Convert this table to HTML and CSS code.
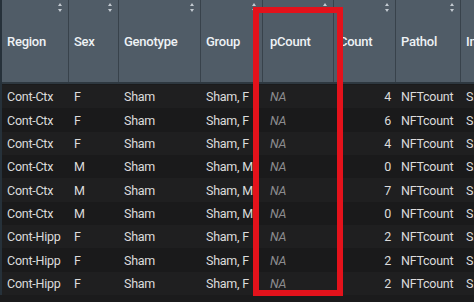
FILE: index.html
```html
<!DOCTYPE html>
<html>
<head>
<meta charset="utf-8">
<link rel="stylesheet" href="styles.css">
</head>
<body>
<div class="grid">
  <div class="row head">
    <div class="c c1"><span>Region</span><i class="sort"></i></div>
    <div class="c c2"><span>Sex</span><i class="sort"></i></div>
    <div class="c c3"><span>Genotype</span><i class="sort"></i></div>
    <div class="c c4"><span>Group</span><i class="sort"></i></div>
    <div class="c c5"><span>pCount</span><i class="sort"></i></div>
    <div class="c c6"><span>Count</span><i class="sort"></i></div>
    <div class="c c7"><span>Pathol</span><i class="sort"></i></div>
    <div class="c c8"><span>In</span></div>
  </div>
  <div class="row"><div class="c c1">Cont-Ctx</div><div class="c c2">F</div><div class="c c3">Sham</div><div class="c c4">Sham, F</div><div class="c c5 na">NA</div><div class="c c6 num">4</div><div class="c c7">NFTcount</div><div class="c c8">S.</div></div>
  <div class="row"><div class="c c1">Cont-Ctx</div><div class="c c2">F</div><div class="c c3">Sham</div><div class="c c4">Sham, F</div><div class="c c5 na">NA</div><div class="c c6 num">6</div><div class="c c7">NFTcount</div><div class="c c8">S.</div></div>
  <div class="row"><div class="c c1">Cont-Ctx</div><div class="c c2">F</div><div class="c c3">Sham</div><div class="c c4">Sham, F</div><div class="c c5 na">NA</div><div class="c c6 num">4</div><div class="c c7">NFTcount</div><div class="c c8">S.</div></div>
  <div class="row"><div class="c c1">Cont-Ctx</div><div class="c c2">M</div><div class="c c3">Sham</div><div class="c c4">Sham, M</div><div class="c c5 na">NA</div><div class="c c6 num">0</div><div class="c c7">NFTcount</div><div class="c c8">S.</div></div>
  <div class="row"><div class="c c1">Cont-Ctx</div><div class="c c2">M</div><div class="c c3">Sham</div><div class="c c4">Sham, M</div><div class="c c5 na">NA</div><div class="c c6 num">7</div><div class="c c7">NFTcount</div><div class="c c8">S.</div></div>
  <div class="row"><div class="c c1">Cont-Ctx</div><div class="c c2">M</div><div class="c c3">Sham</div><div class="c c4">Sham, M</div><div class="c c5 na">NA</div><div class="c c6 num">0</div><div class="c c7">NFTcount</div><div class="c c8">S.</div></div>
  <div class="row"><div class="c c1">Cont-Hipp</div><div class="c c2">F</div><div class="c c3">Sham</div><div class="c c4">Sham, F</div><div class="c c5 na">NA</div><div class="c c6 num">2</div><div class="c c7">NFTcount</div><div class="c c8">S.</div></div>
  <div class="row"><div class="c c1">Cont-Hipp</div><div class="c c2">F</div><div class="c c3">Sham</div><div class="c c4">Sham, F</div><div class="c c5 na">NA</div><div class="c c6 num">2</div><div class="c c7">NFTcount</div><div class="c c8">S.</div></div>
  <div class="row"><div class="c c1">Cont-Hipp</div><div class="c c2">F</div><div class="c c3">Sham</div><div class="c c4">Sham, F</div><div class="c c5 na">NA</div><div class="c c6 num">2</div><div class="c c7">NFTcount</div><div class="c c8">S.</div></div>
</div>
<div class="highlight"></div>
</body>
</html>
```
FILE: styles.css
```css
html, body {
  margin: 0;
  padding: 0;
  width: 474px;
  height: 302px;
  overflow: hidden;
  background: #1b1b1c;
  font-family: "Roboto", "Lato", sans-serif;
  font-size: 12.5px;
  letter-spacing: -0.25px;
  color: #dcdcdc;
}
.grid {
  border-left: 2px solid #26313a;
  width: 472px;
  overflow: hidden;
}
.row {
  display: flex;
  height: 23.35px;
  align-items: center;
  background: #1f1f20;
}
.row:nth-child(odd) {
  background: #1a1a1b;
}
.row.head {
  height: 82px;
  background: #505c67;
  border-bottom: 2px solid #2e3840;
  color: #eef2f5;
  font-weight: 500;
  font-size: 13px;
  margin-bottom: 1px;
}
.c {
  box-sizing: border-box;
  padding-left: 5px;
  white-space: nowrap;
  overflow: hidden;
  flex: none;
}
.head .c {
  height: 100%;
  display: flex;
  align-items: center;
  position: relative;
  border-right: 1px solid #38424b;
}
.head .c5 { padding-left: 7px; }
.row .c5 { padding-left: 7px; }
.c1 { width: 67px; }
.c2 { width: 50px; }
.c3 { width: 82px; }
.c4 { width: 62px; }
.c5 { width: 71px; }
.c6 { width: 62px; }
.c7 { width: 65px; }
.c8 { width: 13px; padding-left: 5px; }
.head .c8 { border-right: none; }
.num {
  text-align: right;
  padding-right: 5px;
}
.na {
  font-style: italic;
  color: #8c8c8f;
}
.sort {
  position: absolute;
  top: 3px;
  right: 5px;
  width: 5px;
  height: 9px;
}
.sort::before, .sort::after {
  content: "";
  position: absolute;
  left: 0;
  border-left: 2.5px solid transparent;
  border-right: 2.5px solid transparent;
}
.sort::before {
  top: 0;
  border-bottom: 3px solid #c3cad1;
}
.sort::after {
  bottom: 0;
  border-top: 3px solid #c3cad1;
}
.highlight {
  position: absolute;
  left: 253px;
  top: 7px;
  width: 90px;
  height: 289px;
  box-sizing: border-box;
  border: 6px solid #e3121b;
}
```
